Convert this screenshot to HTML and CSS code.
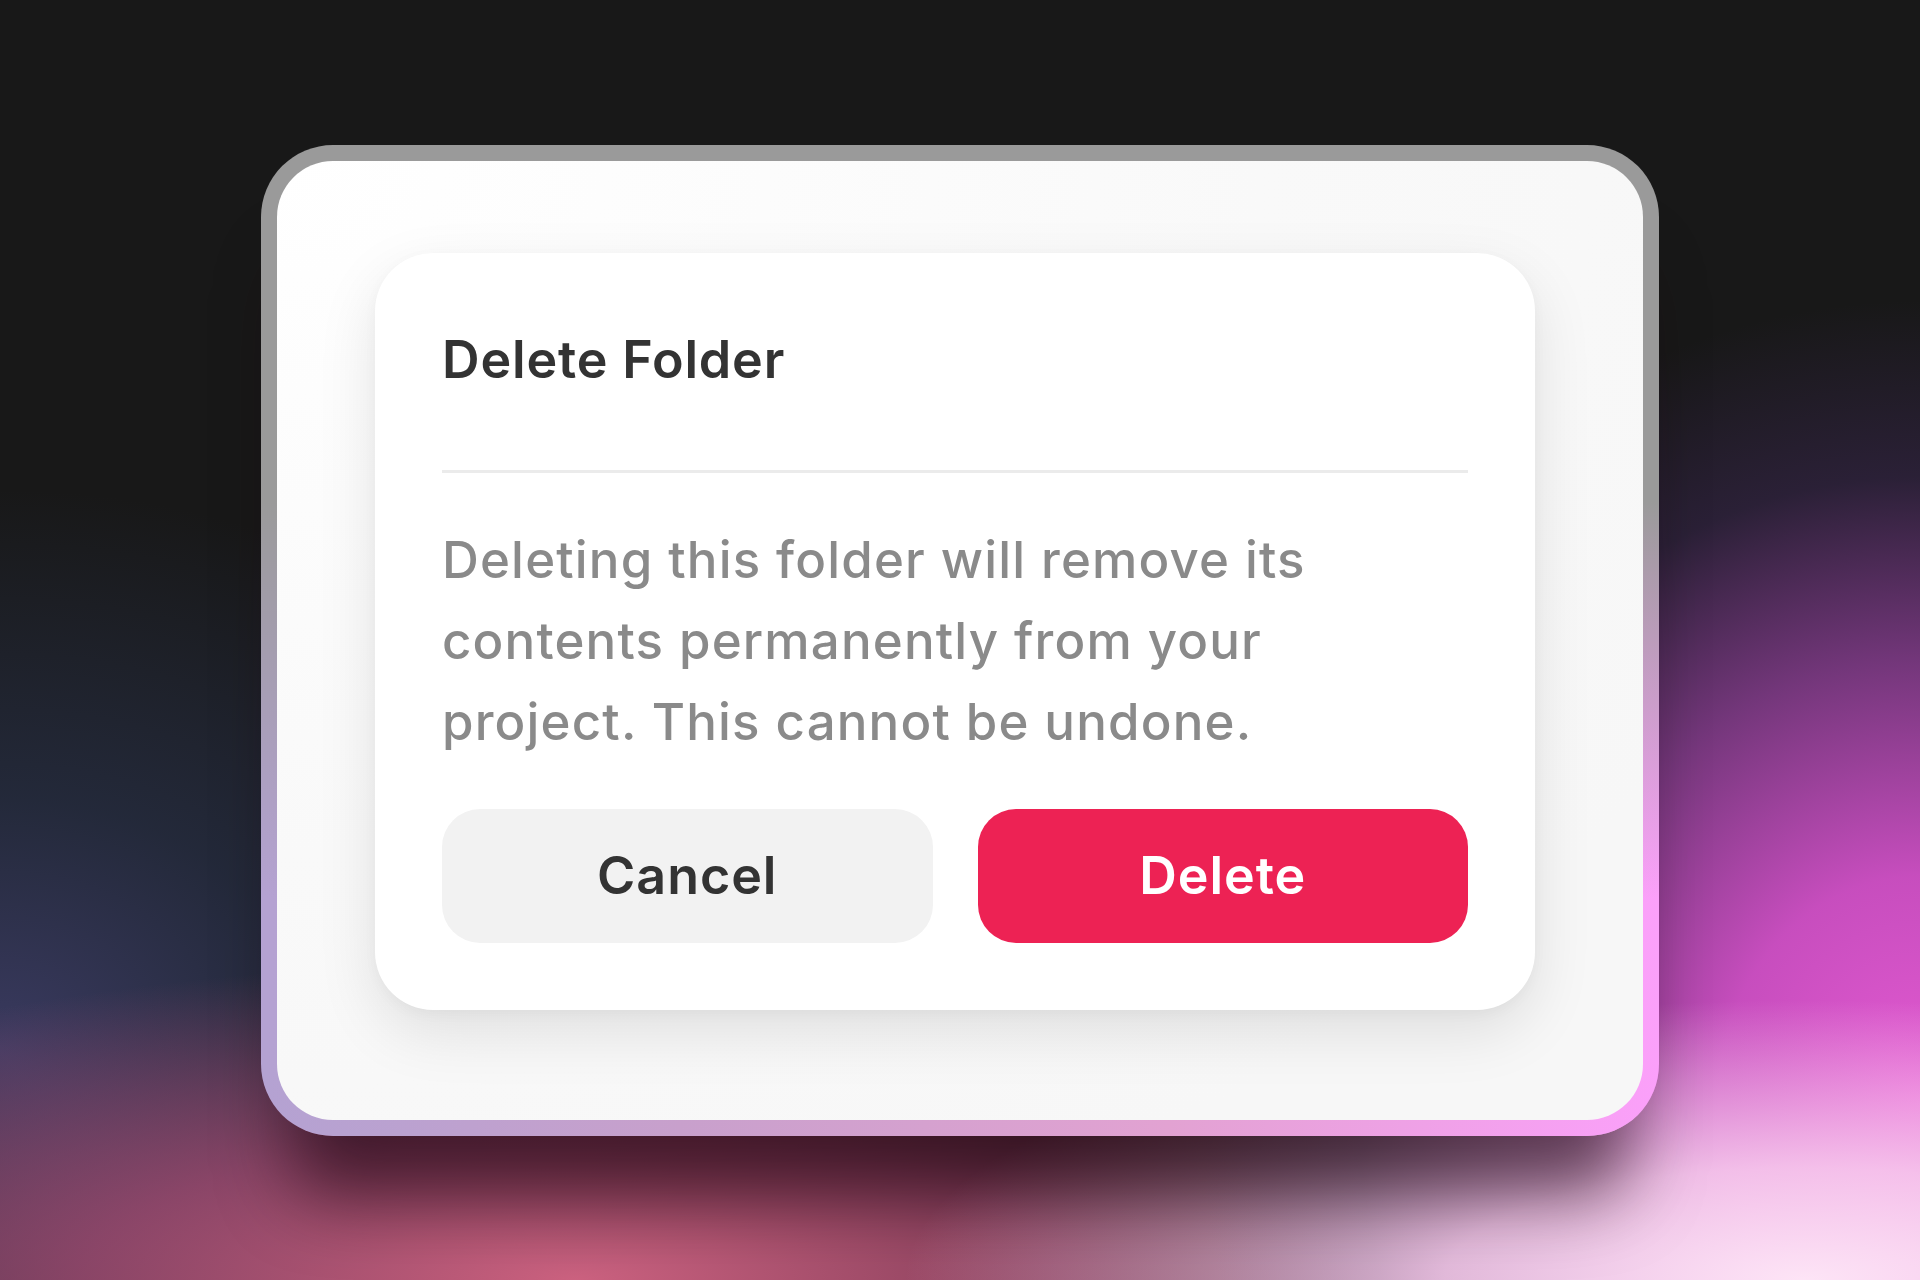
FILE: index.html
```html
<!DOCTYPE html>
<html lang="en">
<head>
<meta charset="utf-8">
<title>Delete Folder</title>
<link rel="stylesheet" href="styles.css">
</head>
<body>
<main class="stage">
  <div class="frame">
    <section class="dialog" role="dialog" aria-labelledby="dlg-title">
      <h2 class="title" id="dlg-title">Delete Folder</h2>
      <hr class="divider">
      <p class="message">Deleting this folder will remove its contents permanently from your project. This cannot be undone.</p>
      <div class="actions">
        <button class="btn btn-cancel" type="button">Cancel</button>
        <button class="btn btn-delete" type="button">Delete</button>
      </div>
    </section>
  </div>
</main>
</body>
</html>
```

FILE: styles.css
```css
html, body {
  margin: 0;
  padding: 0;
}

body {
  width: 1920px;
  height: 1280px;
  overflow: hidden;
  font-family: "Inter", "Noto Sans", "Liberation Sans", sans-serif;
  background:
    radial-gradient(ellipse 900px 280px at 94% 100%, rgba(253, 228, 246, 1) 0%, rgba(250, 210, 240, 0.85) 40%, rgba(245, 190, 230, 0) 100%),
    radial-gradient(ellipse 720px 800px at 100% 86%, #e45ad2 0%, rgba(214, 82, 204, 0.92) 28%, rgba(150, 66, 160, 0.72) 55%, rgba(70, 44, 100, 0.4) 78%, rgba(40, 36, 60, 0) 100%),
    radial-gradient(ellipse 1100px 320px at 30% 100%, rgba(204, 98, 128, 1) 0%, rgba(180, 80, 120, 0.7) 45%, rgba(120, 60, 100, 0) 100%),
    radial-gradient(ellipse 700px 560px at 0% 82%, rgba(60, 60, 100, 0.95) 0%, rgba(40, 48, 72, 0.7) 45%, rgba(24, 24, 24, 0) 100%),
    #181818;
}

.stage {
  height: 1280px;
  display: flex;
  align-items: center;
  justify-content: center;
}

.frame {
  width: 1398px;
  height: 991px;
  box-sizing: border-box;
  border: 16px solid transparent;
  border-radius: 72px;
  padding: 92px 0 0 98px;
  background:
    radial-gradient(ellipse 120% 120% at 0% 0%, #ffffff 0%, #f9f9f9 60%, #f7f7f7 100%) padding-box,
    linear-gradient(to bottom, #9a9a9a 0%, #9a9a9a 36%, rgba(154, 154, 154, 0) 76%) border-box,
    linear-gradient(to right, #b4a2d2 0%, #c8a0cc 30%, #e2a2d2 65%, #fba0fa 100%) border-box;
  box-shadow: 0 90px 70px -30px rgba(25, 0, 12, 0.6);
}

.dialog {
  width: 1160px;
  box-sizing: border-box;
  padding: 75px 67px 67px;
  background: #ffffff;
  border-radius: 58px;
  box-shadow: 0 22px 60px rgba(0, 0, 0, 0.10), 0 4px 14px rgba(0, 0, 0, 0.03);
}

.title {
  margin: 0;
  font-size: 52px;
  line-height: 64px;
  font-weight: 600;
  letter-spacing: 0.016em;
  color: #333333;
}

.divider {
  border: 0;
  height: 3px;
  margin: 78px 0 46px;
  background: #ebebeb;
}

.message {
  margin: 0 0 47px;
  max-width: 940px;
  font-size: 51px;
  line-height: 81px;
  font-weight: 500;
  letter-spacing: 0.023em;
  color: #8a8a8a;
}

.actions {
  display: grid;
  grid-template-columns: 1fr 1fr;
  gap: 45px;
}

.btn {
  height: 134px;
  border: 0;
  border-radius: 38px;
  font-family: inherit;
  font-size: 52px;
  font-weight: 600;
  letter-spacing: 0.018em;
  cursor: pointer;
}

.btn-cancel {
  background: #f2f2f2;
  color: #333333;
}

.btn-delete {
  background: #ed2254;
  color: #ffffff;
}
```
